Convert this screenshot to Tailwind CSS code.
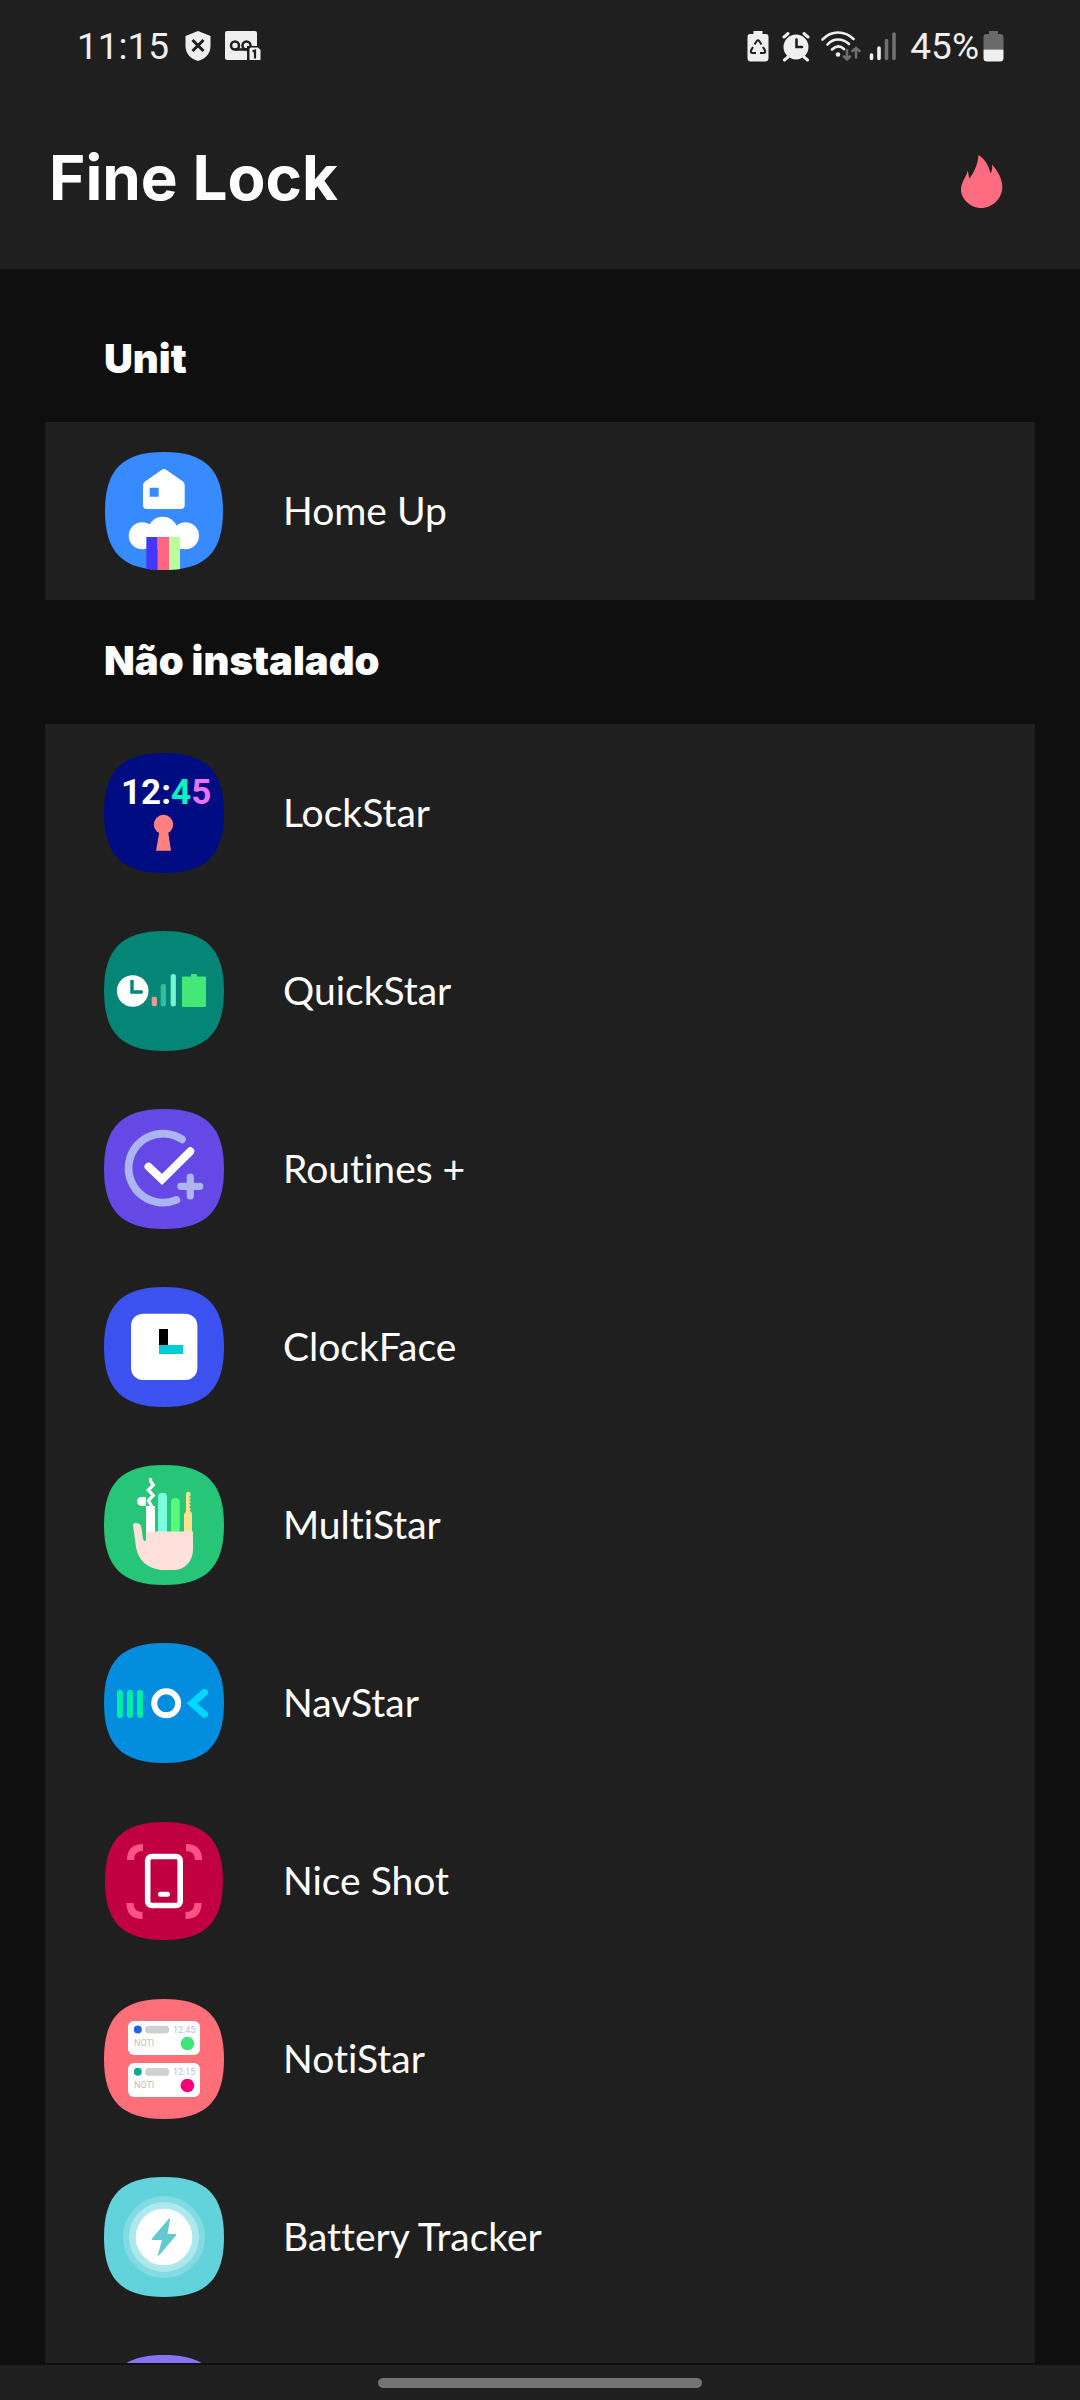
<!DOCTYPE html>
<html lang="pt-BR">

<head>
    <meta charset="UTF-8">
    <meta name="viewport" content="width=device-width, initial-scale=1.0">
    <title>Fine Lock</title>
    <script src="https://cdn.jsdelivr.net/npm/@tailwindcss/browser@4"></script>
</head>

<body class="flex h-screen flex-col overflow-hidden bg-[#0f0f0f] font-['Lato',sans-serif] text-white">

    <!-- shared icon shape -->
    <svg class="hidden">
        <defs>
            <path id="squircle" d="M0 60C0 18 18 0 60 0S120 18 120 60 102 120 60 120 0 102 0 60Z" />
        </defs>
    </svg>

    <header class="shrink-0 bg-[#1f1f1f]">
        <!-- status bar -->
        <div class="flex h-[92px] items-center justify-between pr-[76px] pl-[77px] font-['Roboto',sans-serif] text-[37px] leading-none text-[#efefef]">
            <div class="flex items-center">
                <span>11:15</span>
                <svg class="ml-4 h-[30px] w-[26px]" viewBox="0 0 26 30">
                    <path fill="#efefef" d="M13 0 25.500 5V15C25.500 23 20 28 13 30 6 28 .5 23 .5 15V5Z" />
                    <path stroke="#1f1f1f" stroke-width="3" d="m7.500 9 11 11M18.500 9l-11 11" />
                </svg>
                <svg class="ml-[14px] h-[30px] w-9" viewBox="0 0 36 30">
                    <rect width="32" height="29" rx="2" fill="#efefef" />
                    <g fill="none" stroke="#1f1f1f" stroke-width="2.500">
                        <circle cx="10" cy="14.500" r="4" />
                        <circle cx="21.500" cy="14.500" r="4" />
                        <path d="M10 18.500h13" />
                    </g>
                    <path fill="#1f1f1f" d="M22 15h14v15H22z" />
                    <path fill="#efefef" d="M24.500 18q0-1.500 1.500-1.500h7l2.500 2.500v10h-11z" />
                    <path fill="none" stroke="#1f1f1f" stroke-width="2.200" d="m27.500 20.500 2.500-1v8" />
                </svg>
            </div>
            <div class="flex items-center">
                <svg class="h-8 w-[22px]" viewBox="0 0 22 32">
                    <path fill="#efefef" d="M6.500 1h9v3H19q2.500 0 2.500 3v21q0 3.500-3.500 3.500H4Q.5 31.500.5 28V7q0-3 2.500-3h3.500z" />
                    <g fill="none" stroke="#1f1f1f" stroke-width="2">
                        <path d="m7.500 14.500 2.300-3.500q1.200-1.700 2.400 0l2.300 3.500M16 17l2 3.500q.7 2.500-1.500 2.500H13M9 23H5.500q-2.200 0-1.500-2.500L6 17" />
                    </g>
                </svg>
                <svg class="ml-[13px] h-8 w-7" viewBox="0 0 28 32">
                    <g fill="none" stroke="#efefef" stroke-width="3" stroke-linecap="round">
                        <path d="M2 7 6 3.500M22 3.500 26 7M6 27l-3.500 3M22 27l3.500 3" />
                    </g>
                    <circle cx="14" cy="17" r="12.500" fill="#efefef" />
                    <path fill="none" stroke="#1f1f1f" stroke-width="2.600" stroke-linecap="round" d="M14.500 9.500V17H20" />
                </svg>
                <svg class="ml-[11px] h-8 w-10" viewBox="0 0 40 32">
                    <g fill="none" stroke="#efefef" stroke-width="2.600" stroke-linecap="round">
                        <path d="M1.500 9.500Q8 2.500 17 2.500T32.500 9" />
                        <path d="M6.500 14.500Q11 9.500 17 9.500T28 14" />
                        <path d="M11 19.500q6-6 12-.5" />
                    </g>
                    <circle cx="17" cy="24.500" r="2.300" fill="#efefef" />
                    <g fill="none" stroke="#6f6f6f" stroke-width="2.600" stroke-linecap="round">
                        <path d="M26 20v9.500M23 26.500l3 3 3-3M35 27.500V18M31.500 21l3.500-3 3.500 3" />
                    </g>
                </svg>
                <svg class="ml-2 h-8 w-7" viewBox="0 0 28 32">
                    <g stroke-width="3.600" stroke-linecap="round">
                        <path stroke="#efefef" d="M2.500 25v3.500M10 18v10.500" />
                        <path stroke="#6f6f6f" d="M17.500 10.500v18M25 4v24.500" />
                    </g>
                </svg>
                <span class="ml-[13px]">45%</span>
                <svg class="ml-1 h-8 w-[21px]" viewBox="0 0 21 32">
                    <path fill="#6a6a6a" d="M6 1h9v3h2.500q3 0 3 3v12.500H.5V7q0-3 3-3H6z" />
                    <path fill="#efefef" d="M.5 19.500h20V28q0 3.500-3.500 3.500H4Q.5 31.500.5 28z" />
                </svg>
            </div>
        </div>

        <div class="flex h-[177px] items-start justify-between pr-[77px] pl-[49px]">
            <h1 class="mt-12 font-['Inter',sans-serif] text-[62px] leading-[76px] font-bold">Fine Lock</h1>
            <button type="button" aria-label="Destaques" class="mt-[62px]">
                <svg class="h-[54px] w-[43px]" viewBox="0 0 43 54">
                    <path fill="#ff6b81" d="M18.500 1C25 5 29 12 30.500 19.500 32 17 32.500 14 32 10.500 37 16 42.300 24 42.300 33 42.300 44 33 54 21 54 10 54 1 44 1 36 1 28 6 24 7.800 16.500L9.300 24.500C14 19 18 10 18.500 1Z" />
                </svg>
            </button>
        </div>
    </header>

    <main class="min-h-0 flex-1 overflow-hidden px-[45px] [font-variant-ligatures:none]">
        <section>
            <h2 class="px-[59px] pt-[60px] pb-[33px] font-['Inter',sans-serif] text-[40px] leading-[60px] font-black">Unit</h2>
            <ul class="bg-[#1f1f1f]">
                <li>
                    <button type="button" class="flex h-[178px] w-full items-center gap-[59px] px-[59px] text-left text-[39px]">
                        <svg class="size-[120px]" viewBox="0 0 120 120">
                            <clipPath id="home-clip">
                                <path d="M1 60C1 18.700 18.700 1 60 1S119 18.700 119 60 101.300 119 60 119 1 101.300 1 60Z" />
                            </clipPath>
                            <g clip-path="url(#home-clip)">
                                <path fill="#378bff" d="M0 0h120v120H0z" />
                                <path fill="#fff" d="M57.500 19Q60 17 62.500 19L79 30.500q1.700 1.500 1.700 4V54q0 4-4 4H43q-4 0-4-4V34.500q0-2.500 2-4z" />
                                <path fill="#378bff" d="M45.700 36.700h9v9h-9z" />
                                <g fill="#fff">
                                    <circle cx="38.200" cy="84.700" r="13.500" />
                                    <circle cx="58.700" cy="81" r="15.200" />
                                    <circle cx="81.500" cy="84.700" r="13.500" />
                                    <path d="M38 82h43v16H38z" />
                                </g>
                                <path fill="#4338ff" d="M42.300 86h11.400v34H42.300z" />
                                <path fill="#ff6680" d="M53.700 86h11.300v34H53.700z" />
                                <path fill="#bbff99" d="M65 86h11v34H65z" />
                            </g>
                        </svg>
                        <span class="pb-0.5">Home Up</span>
                    </button>
                </li>
            </ul>
        </section>

        <section>
            <h2 class="px-[59px] pt-[31px] pb-[33px] font-['Inter',sans-serif] text-[40px] leading-[60px] font-black">Não instalado</h2>
            <ul class="bg-[#1f1f1f]">
                <li>
                    <button type="button" class="flex h-[178px] w-full items-center gap-[59px] px-[59px] text-left text-[39px]">
                        <svg class="size-[120px]" viewBox="0 0 120 120">
                            <use href="#squircle" fill="#000c82" />
                            <text x="17" y="51" fill="#fff" class="font-['Roboto',sans-serif] text-[35px] font-bold">12:<tspan fill="#00f5c4">4</tspan><tspan fill="#ee70ff">5</tspan></text>
                            <circle cx="59.500" cy="71.500" r="9.700" fill="#ff8080" />
                            <path fill="#ff8080" d="M55.500 78h8.500l3 19.700H52z" />
                        </svg>
                        <span class="pb-0.5">LockStar</span>
                    </button>
                </li>
                <li>
                    <button type="button" class="flex h-[178px] w-full items-center gap-[59px] px-[59px] text-left text-[39px]">
                        <svg class="size-[120px]" viewBox="0 0 120 120">
                            <use href="#squircle" fill="#048576" />
                            <circle cx="28.700" cy="60" r="15.800" fill="#fff" />
                            <path fill="none" stroke="#048576" stroke-width="3.400" d="M28 49v12h10.700" />
                            <rect x="47.700" y="65.700" width="5.300" height="9.600" rx="2" fill="#e69a94" />
                            <rect x="56.700" y="53" width="5.300" height="22.500" rx="2.500" fill="#33bf99" />
                            <rect x="66.700" y="43" width="5.200" height="32.500" rx="2.500" fill="#70f5cf" />
                            <path fill="#43e878" d="M78 46.500q0-1 1-1h8V44q0-1 1-1h4q1 0 1 1v1.500h8q1 0 1 1V75q0 1-1 1H79q-1 0-1-1z" />
                        </svg>
                        <span class="pb-0.5">QuickStar</span>
                    </button>
                </li>
                <li>
                    <button type="button" class="flex h-[178px] w-full items-center gap-[59px] px-[59px] text-left text-[39px]">
                        <svg class="size-[120px]" viewBox="0 0 120 120">
                            <use href="#squircle" fill="#6549e6" />
                            <g fill="none" stroke-linecap="round">
                                <path stroke="#acb5f0" stroke-width="7.800" d="M78 30.300A34.500 34.500 0 1 0 72.300 91" />
                                <path stroke="#fff" stroke-width="8" d="M44.500 57.700 58 70.500 86.300 42.300" />
                                <path stroke="#acb5f0" stroke-width="7.200" d="M76.800 77.300h19M86.300 68v19" />
                            </g>
                        </svg>
                        <span class="pb-0.5">Routines +</span>
                    </button>
                </li>
                <li>
                    <button type="button" class="flex h-[178px] w-full items-center gap-[59px] px-[59px] text-left text-[39px]">
                        <svg class="size-[120px]" viewBox="0 0 120 120">
                            <use href="#squircle" fill="#3b52f0" />
                            <rect x="27" y="26.700" width="66.400" height="66.400" rx="12" fill="#fff" />
                            <path fill="#000" d="M55 42h9v16h-9z" />
                            <path fill="#00cdd7" d="M55 58h24v9H55z" />
                        </svg>
                        <span class="pb-0.5">ClockFace</span>
                    </button>
                </li>
                <li>
                    <button type="button" class="flex h-[178px] w-full items-center gap-[59px] px-[59px] text-left text-[39px]">
                        <svg class="size-[120px]" viewBox="0 0 120 120">
                            <use href="#squircle" fill="#26c577" />
                            <path fill="#fff" d="M42 41h9v27h-9zM42 32h-4q-5 0-5 4.300t5 4.700h4z" />
                            <path fill="none" stroke="#fff" stroke-width="3.200" d="M46.500 13v3l2.800 4-5 5 5 5.500-5 5 3.500 6" />
                            <path fill="#7dfde0" d="M54 68V32q0-4.300 4.500-4.300T63 32v36z" />
                            <path fill="#59fa7c" d="M67 68V37q0-4 4.400-4t4.300 4v31z" />
                            <path fill="#fce18f" d="M80 68V50q0-2 2-3V28q2.500-2.500 4.500 0v2.500l-1.500 1 2 2-2 1.500 2 2-2 1.500 2 2-2 1.500 2 2-1.500 1.500q2.500 1 2.500 4v18.500z" />
                            <path fill="#ffe0db" d="M29 60q0-2 2.500-2 5 0 5.800 4L39 74q2.500 4.500 3 0v-7.500h47V84c0 12-8 21-19 21H57C43 103 34 95 32 82Z" />
                        </svg>
                        <span class="pb-0.5">MultiStar</span>
                    </button>
                </li>
                <li>
                    <button type="button" class="flex h-[178px] w-full items-center gap-[59px] px-[59px] text-left text-[39px]">
                        <svg class="size-[120px]" viewBox="0 0 120 120">
                            <use href="#squircle" fill="#038dde" />
                            <g fill="none" stroke-width="6" stroke-linecap="round">
                                <path stroke="#00eda6" d="M16 49.700V72M26 49.700V72M36 49.700V72" />
                                <circle cx="62.200" cy="60.300" r="12" stroke="#fff" />
                                <path stroke="#00d8ff" stroke-width="7" d="M100.500 49.500 88 60.300l12.500 11" />
                            </g>
                        </svg>
                        <span class="pb-0.5">NavStar</span>
                    </button>
                </li>
                <li>
                    <button type="button" class="flex h-[178px] w-full items-center gap-[59px] px-[59px] text-left text-[39px]">
                        <svg class="size-[120px]" viewBox="0 0 120 120">
                            <use href="#squircle" fill="#c10042" transform="translate(1 1) scale(.983)" />
                            <g fill="none" stroke="#ff5388" stroke-width="7">
                                <path d="M26.500 39q0-12.500 12.500-12.500M82 26.500q12.500 0 12.500 12.500M26 82q0 12.500 12.500 12.500M81.500 94.500Q94 94.500 94 82" />
                            </g>
                            <rect x="43.700" y="35.500" width="32.500" height="49" rx="4" fill="none" stroke="#fff" stroke-width="5.600" />
                            <path stroke="#fff" stroke-width="5" stroke-linecap="round" d="M56.500 73.200h7" />
                        </svg>
                        <span class="pb-0.5">Nice Shot</span>
                    </button>
                </li>
                <li>
                    <button type="button" class="flex h-[178px] w-full items-center gap-[59px] px-[59px] text-left text-[39px]">
                        <svg class="size-[120px]" viewBox="0 0 120 120">
                            <use href="#squircle" fill="#ff6f79" />
                            <rect x="24" y="22" width="72" height="34" rx="6" fill="#fff" />
                            <rect x="24" y="64" width="72" height="34" rx="6" fill="#fff" />
                            <rect x="41" y="26.700" width="24.300" height="7.800" rx="3.900" fill="#d0d0d3" />
                            <rect x="41" y="69" width="24.300" height="7.800" rx="3.900" fill="#d0d0d3" />
                            <circle cx="33.800" cy="30.500" r="4" fill="#2962e8" />
                            <circle cx="33.800" cy="72.700" r="4" fill="#12ab92" />
                            <circle cx="83.400" cy="44.500" r="6.800" fill="#43e37b" />
                            <circle cx="83.400" cy="86.500" r="6.800" fill="#f50076" />
                            <g fill="#c0c0c4" class="font-['Roboto',sans-serif] text-[9px]">
                                <text x="69" y="34">12:45</text>
                                <text x="30" y="47">NOTI</text>
                                <text x="69" y="76">12:15</text>
                                <text x="30" y="89">NOTI</text>
                            </g>
                        </svg>
                        <span class="pb-0.5">NotiStar</span>
                    </button>
                </li>
                <li>
                    <button type="button" class="flex h-[178px] w-full items-center gap-[59px] px-[59px] text-left text-[39px]">
                        <svg class="size-[120px]" viewBox="0 0 120 120">
                            <use href="#squircle" fill="#62d3db" />
                            <circle cx="60" cy="60" r="41" fill="#83dce3" />
                            <circle cx="60" cy="60" r="35" fill="#ade9ec" />
                            <circle cx="60" cy="60" r="28.300" fill="#fff" />
                            <path fill="#62c8d2" d="M65 41.500q1.500-1 1 1L63.500 57H71q2 0 1 1.500L55 78.500q-1.500 1-1-1L58 63h-9q-2 0-1-1.500z" />
                        </svg>
                        <span class="pb-0.5">Battery Tracker</span>
                    </button>
                </li>
                <li>
                    <button type="button" aria-label="Mais" class="flex h-[178px] w-full items-center gap-[59px] px-[59px] text-left text-[39px]">
                        <svg class="size-[120px]" viewBox="0 0 120 120">
                            <use href="#squircle" fill="#8672f3" />
                        </svg>
                    </button>
                </li>
            </ul>
        </section>
    </main>

    <!-- gesture bar -->
    <nav class="flex h-[37px] shrink-0 items-center justify-center border-t-2 border-[#0f0f0f] bg-[#1f1f1f]">
        <div class="h-[10px] w-[30%] rounded-full bg-[#737373]"></div>
    </nav>

</body>

</html>
